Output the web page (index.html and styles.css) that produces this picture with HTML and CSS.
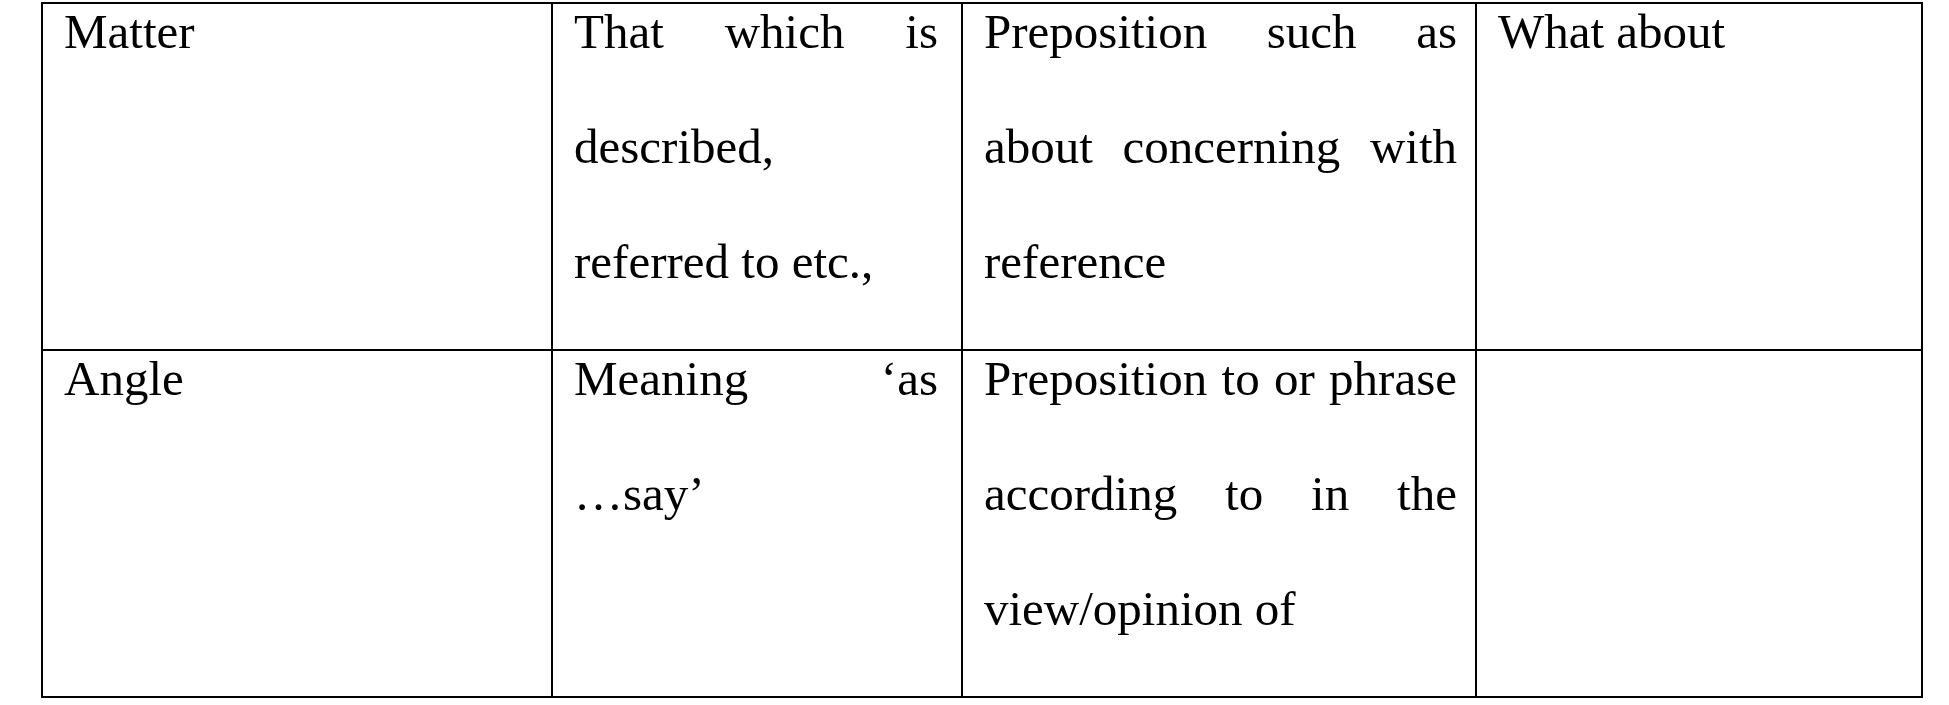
FILE: index.html
```html
<!DOCTYPE html>
<html lang="en">
<head>
<meta charset="utf-8">
<title>Circumstance table</title>
<link rel="stylesheet" href="styles.css">
</head>
<body>
<table class="grid">
  <colgroup>
    <col class="c1">
    <col class="c2">
    <col class="c3">
    <col class="c4">
  </colgroup>
  <tr>
    <td><div class="txt">Matter</div></td>
    <td class="narrow"><div class="txt">That which is described,<br>referred to etc.,</div></td>
    <td><div class="txt">Preposition such as about concerning with reference</div></td>
    <td><div class="txt">What about</div></td>
  </tr>
  <tr>
    <td><div class="txt">Angle</div></td>
    <td class="narrow"><div class="txt">Meaning &lsquo;as <span class="nobr">&hellip;say&rsquo;</span></div></td>
    <td><div class="txt">Preposition to or phrase according to in the view/opinion of</div></td>
    <td><div class="txt"></div></td>
  </tr>
</table>
</body>
</html>
```

FILE: styles.css
```css
html, body {
  margin: 0;
  padding: 0;
  background: #ffffff;
}

body {
  font-family: "Liberation Serif", "Times New Roman", serif;
  font-size: 49px;
  color: #000000;
}

.grid {
  border-collapse: collapse;
  table-layout: fixed;
  width: 1880px;
  margin: 2px 0 0 41px;
}

.c1 { width: 510px; }
.c2 { width: 410px; }
.c3 { width: 514px; }
.c4 { width: 446px; }

.grid td {
  border: 2px solid #000000;
  padding: 0 18px 0 21px;
  vertical-align: top;
  height: 345px;
}

.grid td.narrow {
  padding-right: 23px;
}

.txt {
  line-height: 115px;
  text-align: justify;
  margin-top: -30px;
  margin-bottom: 30px;
}

.nobr {
  white-space: nowrap;
}
```
